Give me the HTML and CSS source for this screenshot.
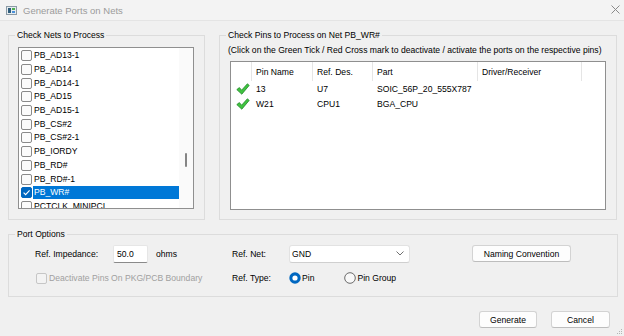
FILE: index.html
```html
<!DOCTYPE html>
<html>
<head>
<meta charset="utf-8">
<title>Generate Ports on Nets</title>
<link rel="stylesheet" href="styles.css">
</head>
<body>
<div class="titlebar">
  <svg class="app-icon" viewBox="0 0 11 9" width="11" height="9"><rect x="0.5" y="0.5" width="10" height="8" fill="#e6ecef" stroke="#8b9aa5"/><rect x="2" y="2" width="3" height="5" fill="#2f5d7c"/><rect x="6" y="2" width="3" height="2" fill="#4caf50"/><rect x="6" y="5" width="3" height="2" fill="#4a90d9"/></svg>
  <span class="title">Generate Ports on Nets</span>
  <svg class="close" viewBox="0 0 9 9" width="9" height="9"><path d="M0.5 0.5 L8.5 8.5 M8.5 0.5 L0.5 8.5" stroke="#8a8a8a" stroke-width="1" fill="none"/></svg>
</div>
<div class="content">
  <div class="top-row">
    <fieldset class="group nets">
      <legend>Check Nets to Process</legend>
      <div class="group-body nets-body">
        <div class="listbox">
          <ul class="items">
            <li class="item"><span class="cb"></span><span class="item-label">PB_AD13-1</span></li>
            <li class="item"><span class="cb"></span><span class="item-label">PB_AD14</span></li>
            <li class="item"><span class="cb"></span><span class="item-label">PB_AD14-1</span></li>
            <li class="item"><span class="cb"></span><span class="item-label">PB_AD15</span></li>
            <li class="item"><span class="cb"></span><span class="item-label">PB_AD15-1</span></li>
            <li class="item"><span class="cb"></span><span class="item-label">PB_CS#2</span></li>
            <li class="item"><span class="cb"></span><span class="item-label">PB_CS#2-1</span></li>
            <li class="item"><span class="cb"></span><span class="item-label">PB_IORDY</span></li>
            <li class="item"><span class="cb"></span><span class="item-label">PB_RD#</span></li>
            <li class="item"><span class="cb"></span><span class="item-label">PB_RD#-1</span></li>
            <li class="item sel"><span class="cb checked"><svg viewBox="0 0 11 11" width="11" height="11"><path d="M2.6 5.6 L4.6 7.6 L8.6 3.4" stroke="#fff" stroke-width="1.1" fill="none"/></svg></span><span class="item-label">PB_WR#</span></li>
            <li class="item"><span class="cb"></span><span class="item-label">PCTCLK_MINIPCI</span></li>
          </ul>
          <div class="vscroll"><div class="thumb"></div></div>
        </div>
      </div>
    </fieldset>
    <fieldset class="group pins">
      <legend>Check Pins to Process on Net PB_WR#</legend>
      <div class="group-body pins-body">
        <p class="hint">(Click on the Green Tick / Red Cross mark to deactivate / activate the ports on the respective pins)</p>
        <div class="listview">
          <div class="lv-row lv-head">
            <div class="c c0"></div>
            <div class="c c1">Pin Name</div>
            <div class="c c2">Ref. Des.</div>
            <div class="c c3">Part</div>
            <div class="c c4">Driver/Receiver</div>
          </div>
          <div class="lv-row">
            <div class="c c0"><svg class="tick" viewBox="0 0 14 12" width="14" height="12"><path d="M0.8 6.6 L3.4 4.6 L5.6 7.2 L11.4 0.8 L13.2 2.4 L5.8 11.2 Z" fill="#3fc43f" stroke="#22862a" stroke-width="0.8" stroke-linejoin="round"/></svg></div>
            <div class="c c1">13</div>
            <div class="c c2">U7</div>
            <div class="c c3">SOIC_56P_20_555X787</div>
            <div class="c c4"></div>
          </div>
          <div class="lv-row">
            <div class="c c0"><svg class="tick" viewBox="0 0 14 12" width="14" height="12"><path d="M0.8 6.6 L3.4 4.6 L5.6 7.2 L11.4 0.8 L13.2 2.4 L5.8 11.2 Z" fill="#3fc43f" stroke="#22862a" stroke-width="0.8" stroke-linejoin="round"/></svg></div>
            <div class="c c1">W21</div>
            <div class="c c2">CPU1</div>
            <div class="c c3">BGA_CPU</div>
            <div class="c c4"></div>
          </div>
        </div>
      </div>
    </fieldset>
  </div>
  <fieldset class="group port">
    <legend>Port Options</legend>
    <div class="group-body port-grid">
      <span class="lbl">Ref. Impedance:</span>
      <div class="textbox">50.0</div>
      <span class="lbl">ohms</span>
      <span class="lbl">Ref. Net:</span>
      <div class="select"><span>GND</span><svg viewBox="0 0 8 5" width="8" height="5"><path d="M0.5 0.5 L4 4 L7.5 0.5" stroke="#606060" fill="none" stroke-width="0.9"/></svg></div>
      <button class="btn naming">Naming Convention</button>
      <label class="deact"><span class="cb disabled"></span><span>Deactivate Pins On PKG/PCB Boundary</span></label>
      <span class="lbl">Ref. Type:</span>
      <div class="radios">
        <span class="radio"><svg viewBox="0 0 12 12" width="12" height="12"><circle cx="6" cy="6" r="5.7" fill="#0067c0"/><circle cx="6" cy="6" r="2.6" fill="#fff"/></svg><span>Pin</span></span>
        <span class="radio"><svg viewBox="0 0 12 12" width="12" height="12"><circle cx="6" cy="6" r="5.3" fill="#f8f8f8" stroke="#5c5c5c" stroke-width="0.9"/></svg><span>Pin Group</span></span>
      </div>
    </div>
  </fieldset>
  <div class="actions">
    <button class="btn gen">Generate</button>
    <button class="btn cancel">Cancel</button>
  </div>
</div>
<svg class="grip" viewBox="0 0 7 7" width="7" height="7"><rect x="5" y="1" width="1" height="1" fill="#b5b5b5"/><rect x="3" y="3" width="1" height="1" fill="#b5b5b5"/><rect x="5" y="3" width="1" height="1" fill="#b5b5b5"/><rect x="1" y="5" width="1" height="1" fill="#b5b5b5"/><rect x="3" y="5" width="1" height="1" fill="#b5b5b5"/><rect x="5" y="5" width="1" height="1" fill="#b5b5b5"/></svg>
</body>
</html>
```
FILE: styles.css
```css
html, body {
  margin: 0;
  padding: 0;
}
body {
  width: 624px;
  height: 336px;
  background: #f0f0f0;
  font-family: "Liberation Sans", Arial, sans-serif;
  font-size: 8.6px;
  color: #000;
  overflow: hidden;
  position: relative;
}
.titlebar {
  height: 20px;
  border-bottom: 1px solid #e4e4e4;
  background: #f3f3f3;
  display: flex;
  align-items: center;
  padding-left: 6px;
}
.app-icon {
  margin-right: 6px;
  flex: none;
}
.title {
  font-size: 9.5px;
  color: #9b9b9b;
  flex: 1;
}
.close {
  margin-right: 4px;
  margin-top: -2px;
}
.content {
  padding: 8px 0 0 8px;
}
.top-row {
  display: flex;
  gap: 14px;
  height: 191px;
}
fieldset.group {
  margin: 0;
  padding: 0;
  border: 1px solid #dcdcdc;
  min-width: 0;
  box-sizing: border-box;
}
fieldset.group > legend {
  padding: 0 2px;
  margin-left: 6px;
  line-height: 12px;
}
.nets {
  width: 197px;
  height: 191px;
}
.nets-body {
  padding: 6px 0 0 9px;
}
.listbox {
  width: 176px;
  height: 162px;
  border: 1px solid #8f8f8f;
  box-sizing: border-box;
  background: #fff;
  display: flex;
  overflow: hidden;
}
.items {
  list-style: none;
  margin: 0;
  padding: 1px 0 0 2px;
  flex: 1;
  overflow: hidden;
}
.item {
  height: 13.7px;
  display: flex;
  align-items: center;
}
.cb {
  width: 11px;
  height: 11px;
  box-sizing: border-box;
  border: 1px solid #8a8a8a;
  border-radius: 2px;
  background: #fbfbfb;
  flex: none;
  margin-right: 1px;
  display: block;
}
.cb.checked {
  background: #0067c0;
  border-color: #0067c0;
}
.cb.checked svg {
  display: block;
  margin: -1px;
}
.cb.disabled {
  border-color: #c6c6c6;
  background: #f3f3f3;
}
.item-label {
  padding: 0 1px;
  line-height: 13px;
  white-space: nowrap;
}
.item.sel .item-label {
  background: #0078d7;
  color: #fff;
  flex: 1;
}
.vscroll {
  width: 14px;
  flex: none;
  background: #fafafa;
}
.thumb {
  width: 2px;
  height: 14px;
  margin: 105px 0 0 6px;
  background: #858585;
  border-radius: 1px;
}
.pins {
  width: 398px;
  height: 191px;
}
.pins-body {
  padding: 3px 0 0 8px;
}
.hint {
  margin: 0;
  line-height: 12px;
  white-space: nowrap;
}
.listview {
  margin: 5px 0 0 2px;
  width: 376px;
  height: 149px;
  border: 1px solid #8f8f8f;
  box-sizing: border-box;
  background: #fff;
}
.lv-row {
  display: flex;
  height: 15px;
}
.lv-head {
  height: 19px;
}
.c {
  box-sizing: border-box;
  padding-left: 4px;
  display: flex;
  align-items: center;
  white-space: nowrap;
  border-right: 1px solid transparent;
}
.lv-head .c {
  border-right-color: #e5e5e5;
}
.c0 { width: 21px; padding-left: 5px; }
.c1 { width: 61px; }
.c2 { width: 60px; }
.c3 { width: 105px; }
.c4 { width: 104px; }
.tick {
  display: block;
}
fieldset.group.port {
  width: 610px;
  height: 69px;
  margin-top: 8px;
}
.port-grid {
  padding: 4px 0 0 26px;
  display: grid;
  grid-template-columns: 78px 43px 76px 57px 183px auto;
  grid-template-rows: 19px 14px;
  row-gap: 8px;
  align-items: center;
}
.lbl {
  white-space: nowrap;
}
.textbox {
  width: 35px;
  height: 18px;
  box-sizing: border-box;
  background: #fff;
  border: 1px solid #e6e6e6;
  border-bottom: 1px solid #8a8a8a;
  border-radius: 2px;
  padding-left: 3px;
  display: flex;
  align-items: center;
}
.select {
  width: 121px;
  height: 18px;
  box-sizing: border-box;
  background: #fff;
  border: 1px solid #e2e2e2;
  border-bottom-color: #cfcfcf;
  border-radius: 3px;
  padding: 0 5px 0 2px;
  display: flex;
  align-items: center;
  justify-content: space-between;
}
.btn {
  height: 17px;
  box-sizing: border-box;
  border: 1px solid #d3d3d3;
  border-bottom-color: #bdbdbd;
  border-radius: 3px;
  background: #fdfdfd;
  font: inherit;
  color: #000;
  padding: 0;
  display: flex;
  align-items: center;
  justify-content: center;
}
.naming {
  width: 99px;
}
.deact {
  grid-column: 1 / 4;
  display: flex;
  align-items: center;
  color: #a0a0a0;
  padding-left: 1px;
}
.deact .cb {
  margin-right: 2px;
}
.radios {
  display: flex;
  align-items: center;
}
.radio {
  display: flex;
  align-items: center;
  gap: 1px;
}
.radio svg {
  display: block;
}
.radio + .radio {
  margin-left: 30px;
}
.actions {
  display: flex;
  justify-content: flex-end;
  gap: 14px;
  margin-top: 14px;
  padding-right: 14px;
}
.gen { width: 58px; }
.cancel { width: 59px; }
.grip {
  position: absolute;
  right: 1px;
  bottom: 1px;
}
```
